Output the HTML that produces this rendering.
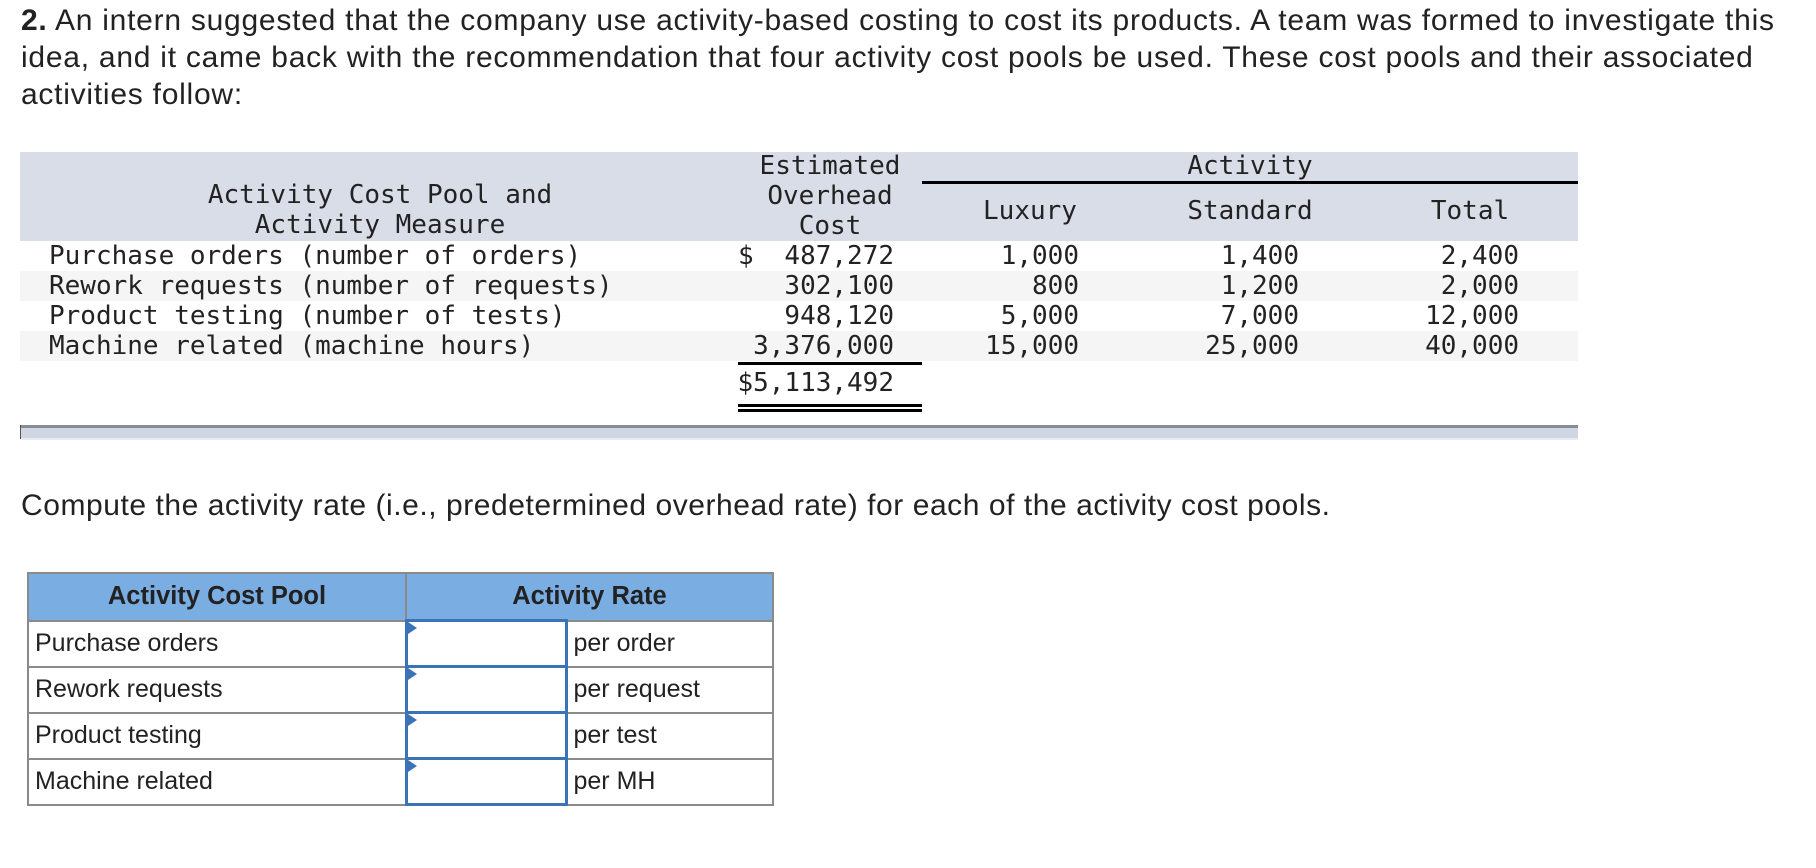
<!DOCTYPE html>
<html><head><meta charset="utf-8"><style>
body{margin:0;width:1816px;height:868px;background:#fff;position:relative;overflow:hidden;font-family:"Liberation Sans",Arial,sans-serif;color:#222}
.h{position:absolute;left:21px;font-size:30px;white-space:nowrap;line-height:37px;letter-spacing:0.75px}
.m{position:absolute;font-family:"DejaVu Sans Mono","Liberation Mono",monospace;font-size:26px;line-height:30px;white-space:pre;color:#222}
.r{text-align:right}
.c{text-align:center}
.band{position:absolute;left:20px;width:1558px}
table.b{position:absolute;left:27px;top:572px;border-collapse:collapse;font-size:25px;table-layout:fixed}
table.b td{border:2px solid #8a8a8a;height:43px;padding:0 6px}
table.b th{background:#7aaee3;border:2px solid #8a8a8a;height:43px;font-weight:bold;font-size:25.5px}
.inp{border:3px solid #3b73b9 !important;position:relative;padding:0!important}
.inp:before{content:"";position:absolute;left:0;top:0;border-left:9px solid #3b73b9;border-top:6px solid transparent;border-bottom:6px solid transparent}
</style></head><body>
<div class="h" style="top:2px"><b>2.</b> An intern suggested that the company use activity-based costing to cost its products. A team was formed to investigate this</div>
<div class="h" style="top:39px">idea, and it came back with the recommendation that four activity cost pools be used. These cost pools and their associated</div>
<div class="h" style="top:76px">activities follow:</div>

<div class="band" style="top:152px;height:89px;background:#d9dde8"></div>
<div class="band" style="top:271px;height:30px;background:#f5f5f5"></div>
<div class="band" style="top:331px;height:30px;background:#f5f5f5"></div>
<div style="position:absolute;left:922px;width:656px;top:181px;height:3px;background:#000"></div>

<div class="m c" style="left:150px;width:460px;top:180px">Activity Cost Pool and
Activity Measure</div>
<div class="m c" style="left:740px;width:180px;top:151px">Estimated
Overhead
Cost</div>
<div class="m c" style="left:1100px;width:300px;top:151px">Activity</div>
<div class="m c" style="left:930px;width:200px;top:196px">Luxury</div>
<div class="m c" style="left:1150px;width:200px;top:196px">Standard</div>
<div class="m c" style="left:1370px;width:200px;top:196px">Total</div>

<div class="m" style="left:49px;top:241px">Purchase orders (number of orders)
Rework requests (number of requests)
Product testing (number of tests)
Machine related (machine hours)</div>
<div class="m" style="left:738px;top:241px">$</div>
<div class="m r" style="left:740px;width:154px;top:241px">487,272
302,100
948,120
3,376,000</div>
<div class="m r" style="left:940px;width:139px;top:241px">1,000
800
5,000
15,000</div>
<div class="m r" style="left:1160px;width:139px;top:241px">1,400
1,200
7,000
25,000</div>
<div class="m r" style="left:1380px;width:139px;top:241px">2,400
2,000
12,000
40,000</div>
<div style="position:absolute;left:738px;width:184px;top:362px;height:3px;background:#000"></div>
<div class="m r" style="left:700px;width:194px;top:368px">$5,113,492</div>
<div style="position:absolute;left:738px;width:184px;top:404px;height:3px;background:#000"></div>
<div style="position:absolute;left:738px;width:184px;top:409px;height:3px;background:#000"></div>

<div class="band" style="top:425px;height:3px;background:#8a8c94"></div>
<div class="band" style="top:428px;height:10px;background:#d0d6e2;border-bottom:2px solid #e6ecf6"></div>
<div style="position:absolute;left:20px;top:425px;width:1px;height:14px;background:#555"></div>

<div class="h" style="top:487px;font-size:30px;letter-spacing:0.55px">Compute the activity rate (i.e., predetermined overhead rate) for each of the activity cost pools.</div>

<table class="b">
<colgroup><col style="width:378px"><col style="width:160px"><col style="width:207px"></colgroup>
<tr><th>Activity Cost Pool</th><th colspan="2">Activity Rate</th></tr>
<tr><td>Purchase orders</td><td class="inp"></td><td>per order</td></tr>
<tr><td>Rework requests</td><td class="inp"></td><td>per request</td></tr>
<tr><td>Product testing</td><td class="inp"></td><td>per test</td></tr>
<tr><td>Machine related</td><td class="inp"></td><td>per MH</td></tr>
</table>
</body></html>
